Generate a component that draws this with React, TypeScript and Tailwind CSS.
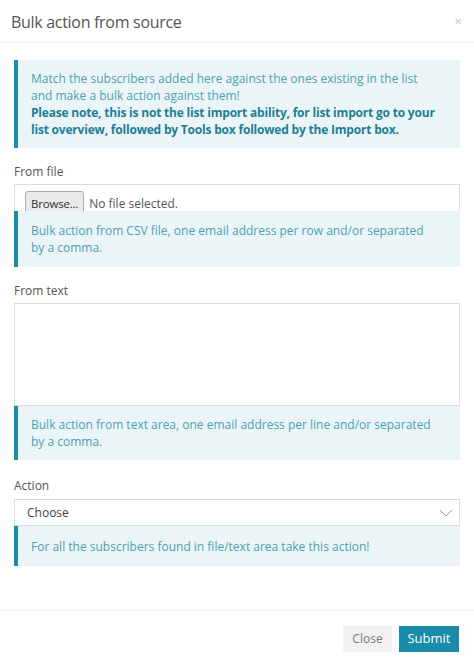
import React from 'react';

const Hint: React.FC<{ children: React.ReactNode; className?: string }> = ({ children, className }) => (
    <div className={`border-l-4 border-[#1a8ca8] bg-[#ebf5f8] pl-[13px] pr-2 text-[12px] leading-[17px] text-[#4d9fb0] whitespace-nowrap ${className ?? ''}`}>
        {children}
    </div>
);

const App: React.FC = () => {
    return (
        <div className="w-[474px] h-[667px] bg-white font-['Open_Sans',sans-serif] text-[#555]">
            <div className="flex items-center justify-between h-[43px] pl-[11px] pr-[12px] border-b border-[#f0f0f0]">
                <h1 className="text-[16px] tracking-[-0.3px] text-[#555] pt-[1px]">Bulk action from source</h1>
                <span className="text-[13px] text-[#c8c8c8] leading-none">×</span>
            </div>

            <div className="px-[14px] pt-[17px]">
                <Hint className="py-[10px]">
                    <p>Match the subscribers added here against the ones existing in the list<br />and make a bulk action against them!</p>
                    <p className="font-bold tracking-[-0.2px] text-[#1c7f95]">Please note, this is not the list import ability, for list import go to your<br />list overview, followed by Tools box followed by the Import box.</p>
                </Hint>

                <label className="block mt-[16px] text-[12px] leading-[16px]">From file</label>
                <div className="mt-[4px] h-[27px] overflow-hidden border border-b-0 border-[#ddd] flex items-start pl-[10px] pt-[6px] gap-[5px]">
                    <span className="h-[26px] px-[5px] flex items-center text-[11.5px] tracking-[-0.2px] text-[#333] bg-[#e9e9e9] border border-[#aaa] rounded-[3px]">Browse...</span>
                    <span className="pt-[4px] text-[12px] text-[#555]">No file selected.</span>
                </div>
                <Hint className="py-[11px]">
                    <p>Bulk action from CSV file, one email address per row and/or separated<br />by a comma.</p>
                </Hint>

                <label className="block mt-[16px] text-[12px] leading-[16px]">From text</label>
                <textarea className="block mt-[4px] w-full h-[103px] border border-[#ddd] resize-none outline-none" />
                <Hint className="py-[10px]">
                    <p>Bulk action from text area, one email address per line and/or separated<br />by a comma.</p>
                </Hint>

                <label className="block mt-[18px] text-[12px] leading-[16px]">Action</label>
                <div className="mt-[5px] h-[27px] border border-[#ddd] flex items-center justify-between pl-[12px] pr-[6px]">
                    <span className="text-[12px] text-[#444]">Choose</span>
                    <svg width="14" height="8" viewBox="0 0 14 8" fill="none" stroke="#999" strokeWidth="1">
                        <path d="M1 1l6 6 6-6" />
                    </svg>
                </div>
                <Hint className="pt-[12px] pb-[11px]">
                    <p>For all the subscribers found in file/text area take this action!</p>
                </Hint>
            </div>

            <div className="mt-[44px] border-t border-[#f0f0f0] flex justify-end gap-[7px] pt-[15px] pr-[15px]">
                <button className="h-[26px] w-[49px] bg-[#f2f2f2] text-[12px] text-[#777]">Close</button>
                <button className="h-[26px] w-[60px] bg-[#1a8ca8] text-[13px] text-white">Submit</button>
            </div>
        </div>
    );
};

export default App;
